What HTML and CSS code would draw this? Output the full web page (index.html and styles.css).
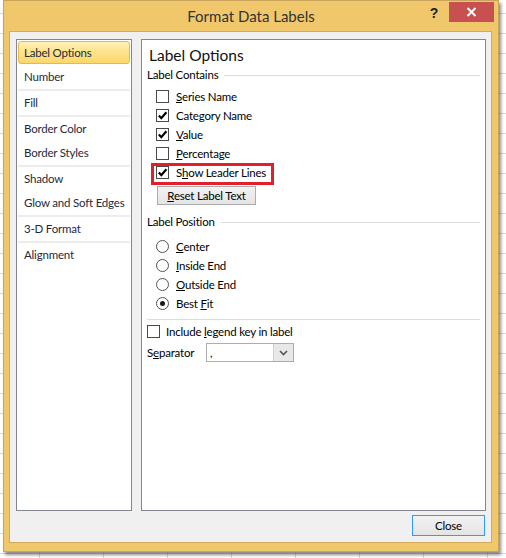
FILE: index.html
```html
<!DOCTYPE html>
<html>
<head>
<meta charset="utf-8">
<link rel="stylesheet" href="styles.css">
</head>
<body>
<div class="window">
  <div class="titlebar">
    <div></div>
    <div class="title">Format Data Labels</div>
    <div class="controls">
      <span class="help">?</span>
      <span class="close-x"><svg width="11" height="10" viewBox="0 0 11 10"><path d="M1.5 1 L9.5 9 M9.5 1 L1.5 9" stroke="#fff" stroke-width="2" fill="none"/></svg></span>
    </div>
  </div>
  <div class="client">
    <div class="panels">
      <ul class="nav">
        <li class="sel">Label Options</li>
        <li class="end">Number</li>
        <li class="end">Fill</li>
        <li>Border Color</li>
        <li class="end">Border Styles</li>
        <li>Shadow</li>
        <li class="end">Glow and Soft Edges</li>
        <li class="end">3-D Format</li>
        <li>Alignment</li>
      </ul>
      <div class="pane">
        <h1 class="heading">Label Options</h1>
        <div class="group-title"><span>Label Contains</span><i></i></div>
        <div class="list">
          <div class="row"><span class="cb"></span><span class="lbl"><u>S</u>eries Name</span></div>
          <div class="row"><span class="cb on"><svg width="11" height="11" viewBox="0 0 11 11"><path d="M1.8 5.6 L4.3 8.2 L9.4 2.2" stroke="#000" stroke-width="2.2" fill="none"/></svg></span><span class="lbl">Cate<u>g</u>ory Name</span></div>
          <div class="row"><span class="cb on"><svg width="11" height="11" viewBox="0 0 11 11"><path d="M1.8 5.6 L4.3 8.2 L9.4 2.2" stroke="#000" stroke-width="2.2" fill="none"/></svg></span><span class="lbl"><u>V</u>alue</span></div>
          <div class="row"><span class="cb"></span><span class="lbl"><u>P</u>ercentage</span></div>
          <div class="row hl"><span class="cb on"><svg width="11" height="11" viewBox="0 0 11 11"><path d="M1.8 5.6 L4.3 8.2 L9.4 2.2" stroke="#000" stroke-width="2.2" fill="none"/></svg></span><span class="lbl">S<u>h</u>ow Leader Lines</span></div>
          <button class="btn reset"><u>R</u>eset Label Text</button>
        </div>
        <div class="group-title pos"><span>Label Position</span><i></i></div>
        <div class="list radios">
          <div class="row"><span class="rb"></span><span class="lbl"><u>C</u>enter</span></div>
          <div class="row"><span class="rb"></span><span class="lbl"><u>I</u>nside End</span></div>
          <div class="row"><span class="rb"></span><span class="lbl"><u>O</u>utside End</span></div>
          <div class="row"><span class="rb on"></span><span class="lbl">Best <u>F</u>it</span></div>
        </div>
        <div class="rule"></div>
        <div class="row legend"><span class="cb"></span><span class="lbl">Include <u>l</u>egend key in label</span></div>
        <div class="sep-row">
          <span class="sep-label">S<u>e</u>parator</span>
          <div class="select">
            <span class="val">,</span>
            <span class="arrow"><svg width="9" height="6" viewBox="0 0 9 6"><path d="M1 1 L4.5 4.5 L8 1" stroke="#555" stroke-width="1.6" fill="none"/></svg></span>
          </div>
        </div>
      </div>
    </div>
    <div class="footer"><button class="btn close">Close</button></div>
  </div>
</div>
</body>
</html>
```

FILE: styles.css
```css
html, body {
  margin: 0;
  padding: 0;
}
body {
  width: 506px;
  height: 558px;
  overflow: hidden;
  background-color: #ffffff;
  background-image:
    linear-gradient(to right, #d8d8d8 1px, transparent 1px),
    linear-gradient(to bottom, #d8d8d8 1px, transparent 1px);
  background-size: 64px 20px;
  background-position: 39px 13px;
  font-family: Lato, "Liberation Sans", sans-serif;
  font-size: 11.5px;
  letter-spacing: -0.2px;
  color: #000;
}
.window {
  margin-left: 3px;
  width: 496px;
  height: 552px;
  box-sizing: border-box;
  border: 1px solid #c9a55c;
  background: #f0c86b;
  box-shadow: 2px 3px 3px rgba(0, 0, 0, 0.45);
  display: flex;
  flex-direction: column;
  padding: 0 6px 8px 5px;
}
.titlebar {
  height: 30px;
  margin: 0 -6px 0 -5px;
  display: grid;
  grid-template-columns: 1fr auto 1fr;
  align-items: start;
}
.title {
  font-size: 15px;
  letter-spacing: 0;
  line-height: 30px;
  color: #333;
}
.controls {
  justify-self: end;
  display: flex;
  align-items: flex-start;
  padding-right: 4px;
  padding-top: 1px;
}
.help {
  font-family: "Liberation Sans", sans-serif;
  font-weight: bold;
  font-size: 14px;
  line-height: 18px;
  color: #222;
  margin-right: 11px;
  margin-top: 2px;
}
.close-x {
  width: 45px;
  height: 20px;
  background: #c75050;
  display: flex;
  align-items: center;
  justify-content: center;
}
.client {
  flex: 1;
  background: #f0f0f0;
  border: 1px solid #d2ab5c;
  padding: 7px 5px 6px 6px;
  display: flex;
  flex-direction: column;
}
.panels {
  flex: 1;
  display: grid;
  grid-template-columns: 116px 345px;
  column-gap: 9px;
}
.nav {
  list-style: none;
  margin: 0;
  padding: 1px 0 0 0;
  background: #fff;
  border: 1px solid #828790;
}
.nav li {
  height: 24px;
  line-height: 24px;
  margin: 0 1px;
  padding-left: 6px;
  color: #1e2b3c;
  white-space: nowrap;
}
.nav li.end {
  border-bottom: 2px solid #ececec;
}
.nav li.sel {
  height: 21px;
  line-height: 21px;
  margin-bottom: 1px;
  padding-left: 5px;
  border: 1px solid #e4b955;
  border-radius: 3px;
  background: linear-gradient(#fff1b8 0%, #fde48c 45%, #fcd76a 100%);
}
.pane {
  background: #fff;
  border: 1px solid #828790;
  padding: 4px 5px 0 5px;
}
.heading {
  margin: 0;
  font-weight: normal;
  font-size: 15.5px;
  letter-spacing: 0;
  line-height: 23px;
  height: 23px;
  padding-left: 2px;
  color: #111;
}
.group-title {
  display: flex;
  align-items: center;
  height: 16px;
  line-height: 16px;
}
.group-title i {
  flex: 1;
  height: 1px;
  background: #dcdcdc;
  margin-left: 6px;
}
.group-title.pos {
  margin-top: 9px;
}
.list {
  margin-top: 4px;
  padding-left: 9px;
}
.list.radios {
  margin-top: 7px;
}
.row {
  height: 19px;
  display: flex;
  align-items: center;
}
.row.hl {
  position: relative;
}
.row.hl::after {
  content: "";
  position: absolute;
  left: -5px;
  top: 0;
  width: 117px;
  height: 16px;
  border: 3px solid #e0202a;
}
.lbl {
  white-space: nowrap;
}
.cb {
  width: 13px;
  height: 13px;
  box-sizing: border-box;
  border: 1px solid #4a4a4a;
  background: #fff;
  margin-right: 7px;
  display: flex;
  align-items: center;
  justify-content: center;
  flex: none;
}
.rb {
  width: 13px;
  height: 13px;
  box-sizing: border-box;
  border: 1px solid #555;
  border-radius: 50%;
  background: #fff;
  margin-right: 7px;
  display: flex;
  align-items: center;
  justify-content: center;
  flex: none;
}
.rb.on::before {
  content: "";
  width: 5px;
  height: 5px;
  border-radius: 50%;
  background: #1a1a1a;
}
.btn {
  font-family: Lato, "Liberation Sans", sans-serif;
  font-size: 11.5px;
  letter-spacing: -0.2px;
  color: #000;
  border: 1px solid #acacac;
  background: linear-gradient(#f2f2f2, #e4e4e4);
  padding: 0;
  margin: 0;
  box-sizing: border-box;
}
.reset {
  margin: 4px 0 0 1px;
  width: 99px;
  height: 19px;
  display: block;
}
.rule {
  height: 1px;
  background: #dcdcdc;
  margin-top: 6px;
}
.row.legend {
  margin-top: 2px;
}
.row.legend .cb {
  margin-right: 6px;
}
.sep-row {
  margin-top: 2px;
  display: flex;
  align-items: center;
  height: 19px;
}
.sep-label {
  width: 59px;
  flex: none;
}
.select {
  width: 88px;
  height: 19px;
  box-sizing: border-box;
  border: 1px solid #abadb3;
  background: #fff;
  display: flex;
}
.select .val {
  flex: 1;
  padding-left: 3px;
  line-height: 17px;
}
.select .arrow {
  width: 19px;
  background: #e8e8e8;
  border-left: 1px solid #d0d0d0;
  display: flex;
  align-items: center;
  justify-content: center;
}
.footer {
  display: flex;
  justify-content: flex-end;
  margin-top: 4px;
  padding-right: 1px;
}
.close {
  width: 73px;
  height: 21px;
  border-color: #3399ff;
}
```
